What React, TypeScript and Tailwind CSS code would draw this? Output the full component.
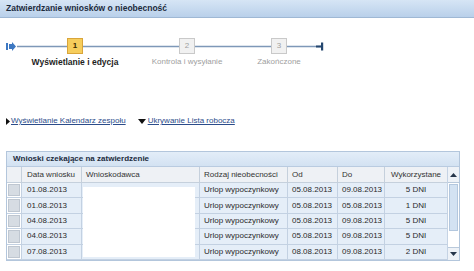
const rows = [
  { date: '01.08.2013', type: 'Urlop wypoczynkowy', from: '05.08.2013', to: '09.08.2013', used: '5 DNI' },
  { date: '01.08.2013', type: 'Urlop wypoczynkowy', from: '05.08.2013', to: '05.08.2013', used: '1 DNI' },
  { date: '04.08.2013', type: 'Urlop wypoczynkowy', from: '05.08.2013', to: '09.08.2013', used: '5 DNI' },
  { date: '04.08.2013', type: 'Urlop wypoczynkowy', from: '05.08.2013', to: '09.08.2013', used: '5 DNI' },
  { date: '07.08.2013', type: 'Urlop wypoczynkowy', from: '08.08.2013', to: '09.08.2013', used: '2 DNI' },
];

const cols = 'grid grid-cols-[15px_60px_118px_88px_50px_47px_62px]';

function Step({ n, label, active, width }: { n: number; label: string; active?: boolean; width: string }) {
  return (
    <div className={`flex flex-col items-center ${width}`}>
      <div
        className={`w-[16px] h-[16px] flex items-center justify-center text-[8px] border ${
          active ? 'bg-[#f6cd5c] border-[#d9a53a] text-[#3a2a00] font-bold' : 'bg-[#f1f1f1] border-[#c9c9c9] text-[#a0a0a0]'
        }`}
      >
        {n}
      </div>
      <div
        className={`mt-[3px] leading-[10px] whitespace-nowrap ${
          active ? 'text-[8.5px] font-bold text-[#1e1e1e]' : 'text-[8px] text-[#a0a0a0]'
        }`}
      >
        {label}
      </div>
    </div>
  );
}

function Scrollbar() {
  return (
    <div className="flex-1 flex flex-col border-l border-[#c5d3e4] bg-white">
      <div className="h-[16px] flex items-center justify-center bg-[#eef2f7] border-b border-[#b9c9db]">
        <svg width="7" height="4" viewBox="0 0 7 4"><path d="M0 4 L3.5 0 L7 4 Z" fill="#26364a" /></svg>
      </div>
      <div className="mx-[1px] mt-[1px] h-[47px] bg-[#d3e2f2] border border-[#b3c7de]" />
      <div className="flex-1" />
      <div className="h-[13px] flex items-center justify-center bg-[#eef2f7] border-t border-[#b9c9db]">
        <svg width="7" height="4" viewBox="0 0 7 4"><path d="M0 0 L7 0 L3.5 4 Z" fill="#26364a" /></svg>
      </div>
    </div>
  );
}

export default function App() {
  return (
    <div className="w-[474px] h-[271px] bg-white overflow-hidden font-['Liberation_Sans',Arial,sans-serif]">
      <div className="h-[18px] flex items-center px-[6px] bg-gradient-to-b from-[#d6e5f5] to-[#b9d0ea] border-b border-[#9fb8d4]">
        <span className="text-[8.5px] font-bold text-[#1c2b3d]">Zatwierdzanie wniosków o nieobecność</span>
      </div>

      <div className="relative mt-[20px] h-[32px]">
        <svg className="absolute left-[6px] top-[4px]" width="320" height="9" viewBox="0 0 320 9">
          <rect x="0" y="1" width="2" height="7" fill="#3d78c2" />
          <path d="M3 2 L6 2 L6 0 L10 4.5 L6 9 L6 7 L3 7 Z" fill="#3d78c2" />
          <line x1="11" y1="4.5" x2="316" y2="4.5" stroke="#7e98b8" strokeWidth="1.3" />
          <line x1="310" y1="4.5" x2="316" y2="4.5" stroke="#24466f" strokeWidth="2" />
          <rect x="315" y="0.5" width="2.2" height="8" fill="#24466f" />
        </svg>
        <div className="relative flex">
          <div className="w-[25px]" />
          <Step n={1} label="Wyświetlanie i edycja" active width="w-[100px]" />
          <Step n={2} label="Kontrola i wysyłanie" width="w-[124px]" />
          <Step n={3} label="Zakończone" width="w-[60px]" />
        </div>
      </div>

      <div className="mt-[46px] flex items-center pl-[6px] text-[8px] leading-[10px]">
        <svg width="4" height="7" viewBox="0 0 4 7"><path d="M0 0 L4 3.5 L0 7 Z" fill="#111" /></svg>
        <span className="ml-[1px] text-[#2b4c8a] underline">Wyświetlanie Kalendarz zespołu</span>
        <svg className="ml-[12px]" width="8" height="5" viewBox="0 0 8 5"><path d="M0 0 L8 0 L4 5 Z" fill="#111" /></svg>
        <span className="ml-[2px] text-[#2b4c8a] underline">Ukrywanie Lista robocza</span>
      </div>

      <div className="mt-[25px] ml-[6px] w-[454px] border border-[#b3c6dc] text-[8px] text-[#2a2a2a]">
        <div className="h-[15px] flex items-center px-[6px] bg-gradient-to-b from-[#e3edf8] to-[#d3e2f2] border-b border-[#b9cbe0]">
          <span className="font-bold text-[#1c2b3d]">Wnioski czekające na zatwierdzenie</span>
        </div>
        <div className="flex">
          <div className="relative">
            <div className={`${cols} h-[16px] bg-[#eef1f5] text-[#333]`}>
              <div className="border-r border-b border-[#c5d0dc]" />
              <div className="flex items-center pl-[5px] border-r border-b border-[#c5d0dc]">Data wniosku</div>
              <div className="flex items-center pl-[4px] border-r border-b border-[#c5d0dc]">Wnioskodawca</div>
              <div className="flex items-center pl-[4px] border-r border-b border-[#c5d0dc]">Rodzaj nieobecności</div>
              <div className="flex items-center pl-[4px] border-r border-b border-[#c5d0dc]">Od</div>
              <div className="flex items-center pl-[4px] border-r border-b border-[#c5d0dc]">Do</div>
              <div className="flex items-center justify-center border-b border-[#c5d0dc]">Wykorzystane</div>
            </div>
            {rows.map((r, i) => (
              <div key={i} className={`${cols} h-[15.4px] bg-[#e5eef8]`}>
                <div className="bg-white border-r border-b border-[#c3d1e2] p-[1px]">
                  <div className="w-full h-full bg-[#d6dce3] border border-[#bfc7d1]" />
                </div>
                <div className="flex items-center pl-[5px] border-r border-b border-[#c3d1e2]">{r.date}</div>
                <div className="border-r border-b border-[#c3d1e2]" />
                <div className="flex items-center pl-[4px] border-r border-b border-[#c3d1e2] whitespace-nowrap">{r.type}</div>
                <div className="flex items-center pl-[4px] border-r border-b border-[#c3d1e2]">{r.from}</div>
                <div className="flex items-center pl-[4px] border-r border-b border-[#c3d1e2]">{r.to}</div>
                <div className="flex items-center justify-center border-b border-[#c3d1e2]">{r.used}</div>
              </div>
            ))}
            <div className="absolute left-[76px] top-[20px] w-[112px] h-[70px] bg-white" />
          </div>
          <div className="w-[12px] flex flex-col">
            <Scrollbar />
          </div>
        </div>
      </div>
    </div>
  );
}
